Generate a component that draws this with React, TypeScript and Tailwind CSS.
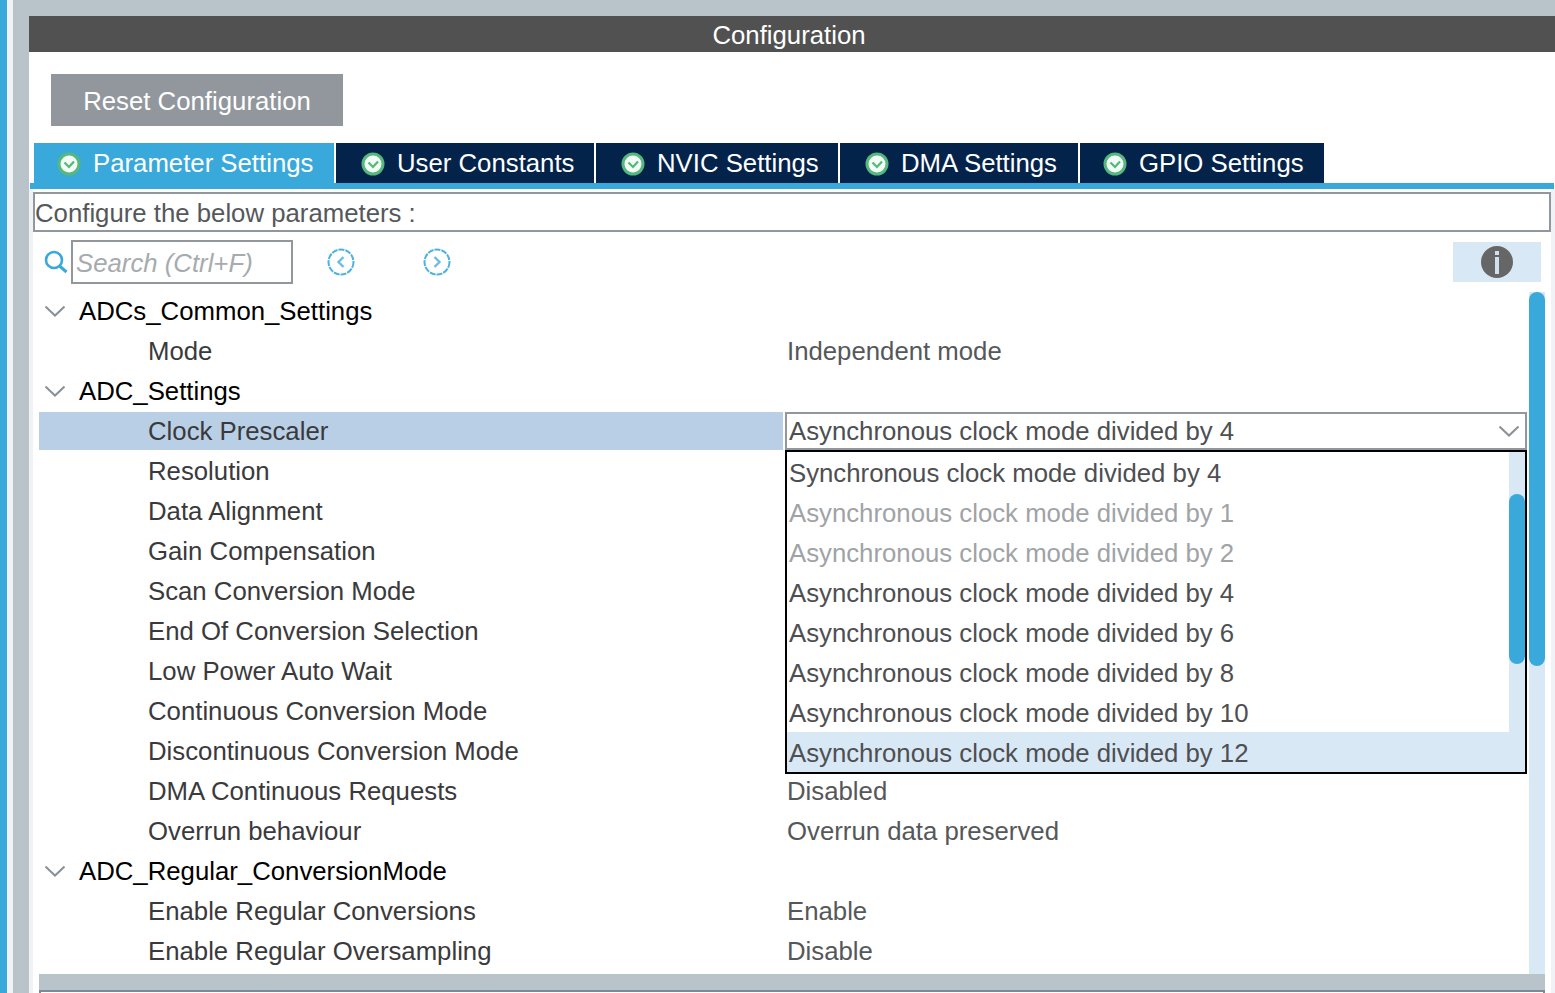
const tabs = [
  { label: "Parameter Settings", cls: "w-[300px] pl-[23px] bg-[#39a9dc]" },
  { label: "User Constants", cls: "w-[258px] pl-[25px] bg-[#03234b]" },
  { label: "NVIC Settings", cls: "w-[242px] pl-[25px] bg-[#03234b]" },
  { label: "DMA Settings", cls: "w-[238px] pl-[25px] bg-[#03234b]" },
  { label: "GPIO Settings", cls: "w-[244px] pl-[23px] bg-[#03234b]" },
];

type Row = { label: string; group?: boolean; value?: string; selected?: boolean };

const rows: Row[] = [
  { label: "ADCs_Common_Settings", group: true },
  { label: "Mode", value: "Independent mode" },
  { label: "ADC_Settings", group: true },
  { label: "Clock Prescaler", selected: true },
  { label: "Resolution" },
  { label: "Data Alignment" },
  { label: "Gain Compensation" },
  { label: "Scan Conversion Mode" },
  { label: "End Of Conversion Selection" },
  { label: "Low Power Auto Wait" },
  { label: "Continuous Conversion Mode" },
  { label: "Discontinuous Conversion Mode" },
  { label: "DMA Continuous Requests", value: "Disabled" },
  { label: "Overrun behaviour", value: "Overrun data preserved" },
  { label: "ADC_Regular_ConversionMode", group: true },
  { label: "Enable Regular Conversions", value: "Enable" },
  { label: "Enable Regular Oversampling", value: "Disable" },
];

const options = [
  { label: "Synchronous clock mode divided by 4" },
  { label: "Asynchronous clock mode divided by 1", disabled: true },
  { label: "Asynchronous clock mode divided by 2", disabled: true },
  { label: "Asynchronous clock mode divided by 4" },
  { label: "Asynchronous clock mode divided by 6" },
  { label: "Asynchronous clock mode divided by 8" },
  { label: "Asynchronous clock mode divided by 10" },
  { label: "Asynchronous clock mode divided by 12", hover: true },
];

function CheckBadge() {
  return (
    <svg width="24" height="24" viewBox="0 0 24 24" className="shrink-0">
      <circle cx="12" cy="12" r="10" fill="#f4fbf6" stroke="#55b97d" strokeWidth="3" />
      <path d="M7.5 10.5l4.5 4.5 5-5.5" fill="none" stroke="#4fb97a" strokeWidth="2.2" />
    </svg>
  );
}

function NavCircle({ dir }: { dir: "left" | "right" }) {
  return (
    <svg width="28" height="28" viewBox="0 0 28 28">
      <circle cx="14" cy="14" r="12.5" fill="none" stroke="#4db2e0" strokeWidth="2" strokeDasharray="6 1" />
      <path d={dir === "left" ? "M16.5 9l-5 5 5 5" : "M11.5 9l5 5-5 5"} fill="none" stroke="#6bbde4" strokeWidth="2.4" />
    </svg>
  );
}

function Chevron() {
  return (
    <svg width="20" height="11" viewBox="0 0 20 11" className="shrink-0">
      <path d="M0.5 0.5L10 9.5L19.5 0.5" fill="none" stroke="#8b9195" strokeWidth="2" />
    </svg>
  );
}

function RowLine({ row }: { row: Row }) {
  if (row.group) {
    return (
      <div className="flex h-10 items-center text-black">
        <span className="ml-[6px] mr-[14px] flex"><Chevron /></span>
        {row.label}
      </div>
    );
  }
  return (
    <div className="flex h-10 items-center text-[#3a3a3c]">
      <div className={`flex h-[38px] w-[744px] items-center pl-[109px] ${row.selected ? "bg-[#b8cfe6]" : ""}`}>
        {row.label}
      </div>
      <div className="pl-[4px] text-[#55585a]">{row.value}</div>
    </div>
  );
}

export default function App() {
  return (
    <div className="flex h-[993px] w-[1555px] overflow-hidden bg-[#b8c3ca] text-[25.75px] [font-family:'Liberation_Sans',Arial,sans-serif]">
      <div className="w-[7px] bg-[#39a9dc]" />
      <div className="w-[6px] bg-[#f0f2f5]" />
      <div className="w-[16px]" />
      <div className="mt-4 flex min-w-0 flex-1 flex-col bg-white">
        <div className="flex h-9 items-center justify-center bg-[#505150] pr-[6px] pt-[2px] text-white">Configuration</div>
        <div className="pl-[22px] pt-[22px]">
          <button className="h-[52px] w-[292px] bg-[#91979c] pt-[2px] text-white">Reset Configuration</button>
        </div>
        <div className="mt-[17px] flex h-10 gap-[2px] pl-[5px]">
          {tabs.map((t) => (
            <div key={t.label} className={`flex items-center gap-[12px] pt-[1px] text-white ${t.cls}`}>
              <CheckBadge />
              {t.label}
            </div>
          ))}
        </div>
        <div className="ml-[1px] h-[6px] w-[1524px] bg-[#39a9dc]" />
        <div className="flex min-h-0 flex-1 border-x-4 border-[#f0f2f5]">
          <div className="flex min-w-0 flex-1 flex-col">
            <div className="mt-[3px] flex h-10 items-center border-2 border-[#91979c] pt-[2px] text-[#55585a]">
              Configure the below parameters :
            </div>
            <div className="relative flex h-[59px] items-center pl-[11px]">
              <svg width="24" height="24" viewBox="0 0 24 24" className="shrink-0">
                <circle cx="10" cy="10" r="8" fill="none" stroke="#39a9dc" strokeWidth="2.6" />
                <path d="M15.5 16l7 6" stroke="#39a9dc" strokeWidth="3" />
              </svg>
              <div className="ml-[3px] flex h-11 w-[222px] items-center border-2 border-[#91979c] pl-[3px] pt-[4px] italic text-[#a6abae]">Search (Ctrl+F)</div>
              <div className="ml-[34px] flex"><NavCircle dir="left" /></div>
              <div className="ml-[68px] flex"><NavCircle dir="right" /></div>
              <div className="absolute right-[10px] top-[10px] flex h-10 w-[88px] items-center justify-center bg-[#d9e8f5]">
                <svg width="32" height="32" viewBox="0 0 32 32">
                  <circle cx="16" cy="16" r="16" fill="#666" />
                  <rect x="14" y="5" width="4" height="4" fill="#cfe0ee" />
                  <rect x="14" y="11" width="4" height="17" fill="#cfe0ee" />
                </svg>
              </div>
            </div>
            <div className="relative ml-[6px] flex-1 overflow-hidden">
              {rows.map((r) => <RowLine key={r.label} row={r} />)}
              <div className="absolute left-[746px] top-[121px] flex h-[38px] w-[742px] items-center justify-between border-2 border-[#91979c] pl-[2px] pr-[6px] text-[#4d4f52]">
                Asynchronous clock mode divided by 4
                <Chevron />
              </div>
              <div className="absolute left-[746px] top-[159px] w-[742px] border-2 border-black bg-white">
                {options.map((o) => (
                  <div key={o.label} className={`flex h-10 items-center pl-[2px] pt-[2px] ${o.disabled ? "text-[#a0a3a6]" : "text-[#4d4f52]"} ${o.hover ? "bg-[#d9e8f5]" : ""}`}>
                    {o.label}
                  </div>
                ))}
                <div className="absolute right-0 top-0 h-full w-4 bg-[#d9e8f5]">
                  <div className="mt-[42px] h-[170px] rounded-full bg-[#39a9dc]" />
                </div>
              </div>
              <div className="absolute bottom-0 left-[1490px] top-[1px] w-4 bg-[#d9e8f5]">
                <div className="h-[374px] rounded-full bg-[#39a9dc]" />
              </div>
              <div className="absolute bottom-0 left-0 h-[19px] w-[1506px] bg-[#b8c3ca] pt-4">
                <div className="h-[3px] border-x-2 border-t-2 border-[#7b8a96] bg-white" />
              </div>
            </div>
          </div>
        </div>
      </div>
    </div>
  );
}
